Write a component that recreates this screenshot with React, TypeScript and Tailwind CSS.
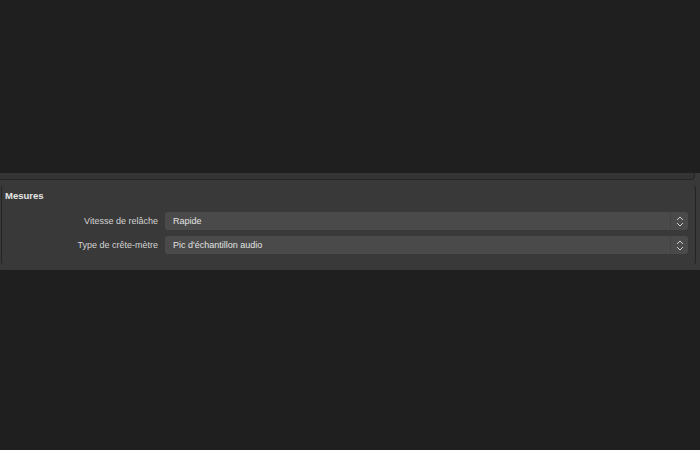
import React from "react";

function Spinner() {
  return (
    <div className="flex w-[18px] flex-col items-center justify-center gap-[1px] border-l border-[#424242]">
      <svg width="8" height="5" viewBox="0 0 8 5" fill="none">
        <path d="M1 4L4 1L7 4" stroke="#cfcfcf" strokeWidth="1" />
      </svg>
      <svg width="8" height="5" viewBox="0 0 8 5" fill="none">
        <path d="M1 1L4 4L7 1" stroke="#cfcfcf" strokeWidth="1" />
      </svg>
    </div>
  );
}

function Row({ label, value }: { label: string; value: string }) {
  return (
    <div className="flex items-center gap-[7px]">
      <div className="w-[156px] pt-[1px] text-right text-[9px] text-[#d4d4d4]">{label}</div>
      <div className="mr-[7px] flex h-[18px] flex-1 rounded-[3px] bg-[#4a4a4a]">
        <div className="flex flex-1 items-center pl-[8px] pt-[1px] text-[9px] text-[#e2e2e2]">{value}</div>
        <Spinner />
      </div>
    </div>
  );
}

export default function App() {
  return (
    <div
      className="flex h-[450px] w-[700px] flex-col bg-[#1f1f1f]"
      style={{ fontFamily: '"Liberation Sans", Arial, sans-serif' }}
    >
      <div className="h-[173px]" />
      <div className="flex h-[97px] flex-col bg-[#393939]">
        <div className="mr-[5px] h-[7px] rounded-br-[4px] border-b border-r border-[#262626] bg-[#343434]" />
        <div className="mt-[5px] ml-[1px] mr-[4px] h-[80px] rounded-[4px] border-x border-[#242424]">
          <div className="pl-[3px] pt-[5px] text-[9.5px] font-semibold leading-[12px] text-[#e6e6e6]">
            Mesures
          </div>
          <div className="mt-[10px] flex flex-col gap-[6px]">
            <Row label="Vitesse de relâche" value="Rapide" />
            <Row label="Type de crête-mètre" value="Pic d'échantillon audio" />
          </div>
        </div>
      </div>
    </div>
  );
}
